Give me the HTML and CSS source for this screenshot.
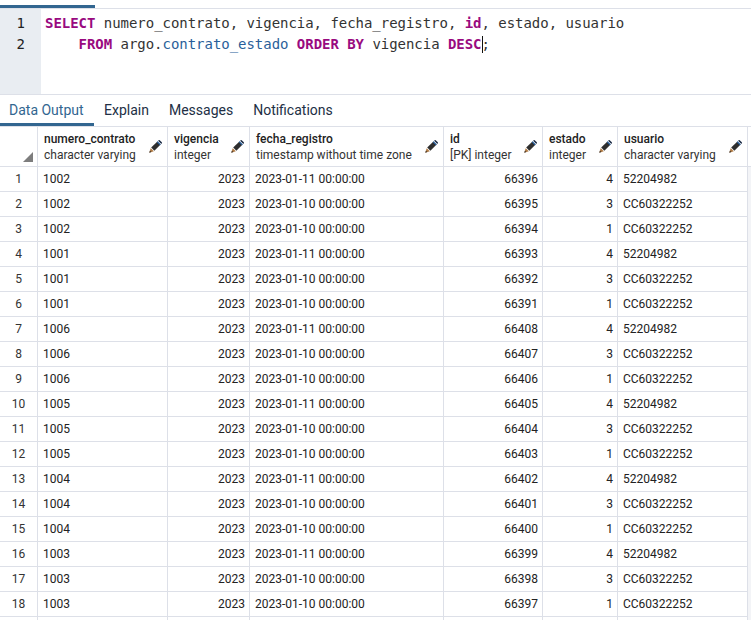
FILE: index.html
```html
<!DOCTYPE html>
<html lang="es">
<head>
<meta charset="utf-8">
<title>Query</title>
<link rel="stylesheet" href="styles.css">
</head>
<body>
<svg class="defs" width="0" height="0" aria-hidden="true"><defs>
<symbol id="pencil" viewBox="0 0 13 13"><path d="M2.2 7.6 8.4 1.4 11.6 4.6 5.4 10.8Z" fill="#2e2e2e"/><path d="M9.1.7 9.7.2Q10.2-.1 10.7.2L12.8 2.3Q13.1 2.8 12.8 3.3L12.3 3.9Z" fill="#1b2a44"/><path d="M7.8 2 8.5 1.3 11.7 4.5 11 5.2Z" fill="#2468b4"/><path d="M1.7 8.2 4.8 11.3 .3 12.7Z" fill="#b07a44"/><path d="M.9 10.7 2.3 12.1.3 12.7Z" fill="#2e2e2e"/></symbol>
</defs></svg>
<div class="top"><div class="top-mark"></div></div>
<section class="editor">
<div class="gutter"><div>1</div><div>2</div></div>
<div class="code">
<div class="line"><span class="kw">SELECT</span><span> numero_contrato, vigencia, fecha_registro, </span><span class="kw">id</span><span>, estado, usuario</span></div>
<div class="line"><span>    </span><span class="kw">FROM</span><span> argo.</span><span class="tb">contrato_estado</span><span> </span><span class="kw">ORDER BY</span><span> vigencia </span><span class="kw">DESC</span><span class="caret"></span><span>;</span></div>
</div>
</section>
<nav class="tabs">
<span class="tab active">Data Output</span><span class="tab">Explain</span><span class="tab">Messages</span><span class="tab">Notifications</span>
</nav>
<div class="grid-wrap">
<table class="grid">
<colgroup><col class="c0"><col class="c1"><col class="c2"><col class="c3"><col class="c4"><col class="c5"><col class="c6"></colgroup>
<thead><tr>
<th class="corner"><span class="tri"></span></th>
<th><div class="h"><div><b>numero_contrato</b><br>character varying</div><svg class="pen"><use href="#pencil"/></svg></div></th>
<th><div class="h"><div><b>vigencia</b><br>integer</div><svg class="pen"><use href="#pencil"/></svg></div></th>
<th><div class="h"><div><b>fecha_registro</b><br>timestamp without time zone</div><svg class="pen"><use href="#pencil"/></svg></div></th>
<th><div class="h"><div><b>id</b><br>[PK] integer</div><svg class="pen"><use href="#pencil"/></svg></div></th>
<th><div class="h"><div><b>estado</b><br>integer</div><svg class="pen"><use href="#pencil"/></svg></div></th>
<th><div class="h"><div><b>usuario</b><br>character varying</div><svg class="pen"><use href="#pencil"/></svg></div></th>
</tr></thead>
<tbody>
<tr><td class="n">1</td><td>1002</td><td class="r">2023</td><td>2023-01-11 00:00:00</td><td class="r">66396</td><td class="r">4</td><td>52204982</td></tr>
<tr><td class="n">2</td><td>1002</td><td class="r">2023</td><td>2023-01-10 00:00:00</td><td class="r">66395</td><td class="r">3</td><td>CC60322252</td></tr>
<tr><td class="n">3</td><td>1002</td><td class="r">2023</td><td>2023-01-10 00:00:00</td><td class="r">66394</td><td class="r">1</td><td>CC60322252</td></tr>
<tr><td class="n">4</td><td>1001</td><td class="r">2023</td><td>2023-01-11 00:00:00</td><td class="r">66393</td><td class="r">4</td><td>52204982</td></tr>
<tr><td class="n">5</td><td>1001</td><td class="r">2023</td><td>2023-01-10 00:00:00</td><td class="r">66392</td><td class="r">3</td><td>CC60322252</td></tr>
<tr><td class="n">6</td><td>1001</td><td class="r">2023</td><td>2023-01-10 00:00:00</td><td class="r">66391</td><td class="r">1</td><td>CC60322252</td></tr>
<tr><td class="n">7</td><td>1006</td><td class="r">2023</td><td>2023-01-11 00:00:00</td><td class="r">66408</td><td class="r">4</td><td>52204982</td></tr>
<tr><td class="n">8</td><td>1006</td><td class="r">2023</td><td>2023-01-10 00:00:00</td><td class="r">66407</td><td class="r">3</td><td>CC60322252</td></tr>
<tr><td class="n">9</td><td>1006</td><td class="r">2023</td><td>2023-01-10 00:00:00</td><td class="r">66406</td><td class="r">1</td><td>CC60322252</td></tr>
<tr><td class="n">10</td><td>1005</td><td class="r">2023</td><td>2023-01-11 00:00:00</td><td class="r">66405</td><td class="r">4</td><td>52204982</td></tr>
<tr><td class="n">11</td><td>1005</td><td class="r">2023</td><td>2023-01-10 00:00:00</td><td class="r">66404</td><td class="r">3</td><td>CC60322252</td></tr>
<tr><td class="n">12</td><td>1005</td><td class="r">2023</td><td>2023-01-10 00:00:00</td><td class="r">66403</td><td class="r">1</td><td>CC60322252</td></tr>
<tr><td class="n">13</td><td>1004</td><td class="r">2023</td><td>2023-01-11 00:00:00</td><td class="r">66402</td><td class="r">4</td><td>52204982</td></tr>
<tr><td class="n">14</td><td>1004</td><td class="r">2023</td><td>2023-01-10 00:00:00</td><td class="r">66401</td><td class="r">3</td><td>CC60322252</td></tr>
<tr><td class="n">15</td><td>1004</td><td class="r">2023</td><td>2023-01-10 00:00:00</td><td class="r">66400</td><td class="r">1</td><td>CC60322252</td></tr>
<tr><td class="n">16</td><td>1003</td><td class="r">2023</td><td>2023-01-11 00:00:00</td><td class="r">66399</td><td class="r">4</td><td>52204982</td></tr>
<tr><td class="n">17</td><td>1003</td><td class="r">2023</td><td>2023-01-10 00:00:00</td><td class="r">66398</td><td class="r">3</td><td>CC60322252</td></tr>
<tr><td class="n">18</td><td>1003</td><td class="r">2023</td><td>2023-01-10 00:00:00</td><td class="r">66397</td><td class="r">1</td><td>CC60322252</td></tr>
<tr><td class="n"></td><td></td><td></td><td></td><td></td><td></td><td></td></tr>
</tbody>
</table>
</div>
</body>
</html>
```
FILE: styles.css
```css
* { box-sizing: border-box; }
html, body { margin: 0; padding: 0; height: 620px; overflow: hidden; background: #fff; }
body { font-family: Roboto, "Liberation Sans", sans-serif; color: #222; }
.defs { position: absolute; }
.top { height: 9px; border-bottom: 1px solid #dde0e8; padding-top: 5px; }
.top-mark { width: 95px; height: 3px; background: #326690; }
.editor { display: flex; height: 86px; border-bottom: 1px solid #dde0e8; }
.gutter { width: 41px; background: #e9edf2; padding: 4px 16px 0 0; font: 14px/21px "DejaVu Sans Mono", monospace; color: #222; text-align: right; }
.code { padding: 4px 0 0 4px; font: 14px/21px "DejaVu Sans Mono", monospace; letter-spacing: -0.035px; color: #333; }
.line { display: flex; height: 21px; white-space: pre; }
.kw { color: #990a7f; font-weight: 700; }
.tb { color: #2a5f9a; }
.caret { width: 1px; height: 17px; background: #111; margin: 2px -1px 0 0; }
.tabs { display: flex; height: 31px; }
.tab { padding: 6px 10px 0 10px; font-size: 14px; line-height: 18px; color: #222f45; }
.tab.active { width: 94px; padding-left: 9px; color: #326690; border-bottom: 3px solid #326690; white-space: nowrap; }
.grid-wrap { height: 495px; overflow: hidden; border-top: 1px solid #dde0e8; background: linear-gradient(#fff 39px, #dde0e8 39px, #dde0e8 40px, #f3f4f7 40px); }
.grid { table-layout: fixed; width: 748px; border-collapse: separate; border-spacing: 0; background: #fff; font-size: 12px; }
.c0 { width: 38px; } .c1 { width: 130px; } .c2 { width: 82px; } .c3 { width: 194px; } .c4 { width: 99px; } .c5 { width: 75px; } .c6 { width: 130px; }
th, td { border-right: 1px solid #dde0e8; border-bottom: 1px solid #dde0e8; padding: 0 5px; overflow: hidden; white-space: nowrap; }
th { height: 40px; padding: 1px 5px 0 6px; text-align: left; font-weight: 400; color: #333; line-height: 16px; }
td { height: 25px; color: #222; }
th b { font-weight: 500; color: #222; }
.h { display: flex; align-items: center; justify-content: space-between; }
.pen { width: 13px; height: 13px; flex: none; margin-bottom: 1px; }
.corner { position: relative; }
.tri { position: absolute; right: 4px; bottom: 4px; width: 0; height: 0; border-left: 10px solid transparent; border-bottom: 10px solid #7d7d7d; }
.n { text-align: center; padding: 0; color: #333; }
.r { text-align: right; padding-right: 4px; }
```
